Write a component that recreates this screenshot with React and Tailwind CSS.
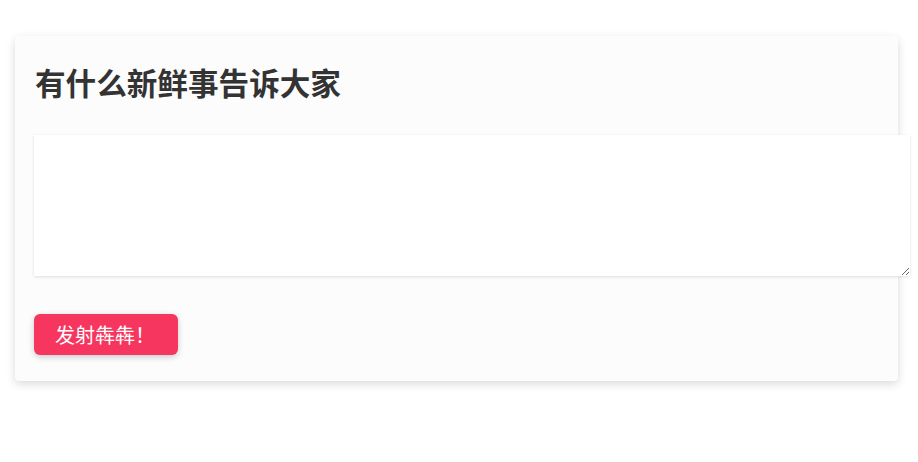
export default function App() {
  return (
    <div className="w-[918px] h-[462px] bg-white overflow-hidden" style={{ fontFamily: '"Noto Sans CJK SC", "Liberation Sans", sans-serif' }}>
      <div className="ml-[15px] mt-[36px] w-[883px] h-[345px] rounded-[4px] bg-[#fcfcfc] shadow-[0_3px_10px_rgba(0,0,0,0.15)] pl-[19px] pt-[20px]">
        <h1 className="text-[30.6px] leading-[52px] font-bold text-[#333333] m-0 pl-[1px]">有什么新鲜事告诉大家</h1>
        <textarea className="block mt-[27px] w-[876px] h-[141px] bg-white shadow-[0_1px_3px_rgba(0,0,0,0.12)] outline-none resize" />
        <button className="block mt-[38px] w-[144px] h-[41px] rounded-[6px] bg-[#f6365e] text-white text-[20px] leading-[41px] text-left pl-[21px] shadow-[0_2px_6px_rgba(0,0,0,0.2)]">发射犇犇！</button>
      </div>
    </div>
  );
}
